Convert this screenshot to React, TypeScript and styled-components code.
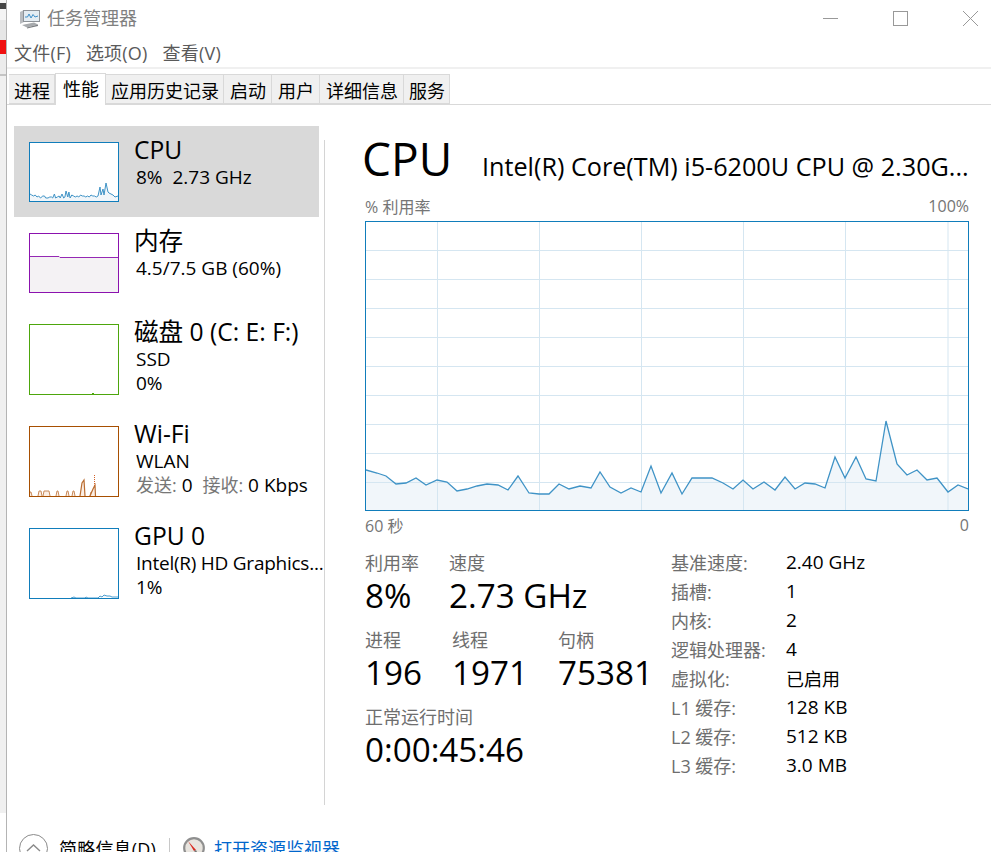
import React from 'react';
import styled, { createGlobalStyle } from 'styled-components';

const FONT = `"Open Sans", "Noto Sans CJK SC", sans-serif`;

const GlobalStyle = createGlobalStyle`
    html, body {
        margin: 0;
        height: 852px;
        overflow: hidden;
        background: #ffffff;
    }
    body {
        font-family: ${FONT};
        color: #000000;
    }
`;

// Window frame
const Page = styled.div`
    display: flex;
    width: 991px;
    height: 852px;
    overflow: hidden;
`;

const DesktopStrip = styled.div`
    display: flex;
    flex-direction: column;
    width: 6px;
    flex: none;
`;

const StripBlock = styled.div<{ $h: number; $c: string }>`
    height: ${p => p.$h}px;
    flex: none;
    background: ${p => p.$c};
`;

const Window = styled.div`
    display: flex;
    flex-direction: column;
    flex: 1;
    min-width: 0;
    border-left: 1px solid #b4b4b4;
    background: #ffffff;
`;

const TitleBar = styled.div`
    display: flex;
    align-items: center;
    box-sizing: border-box;
    height: 36px;
    flex: none;
    padding-left: 12px;
`;

const TitleText = styled.div`
    margin: 0 0 2px 6px;
    font-size: 18px;
    color: #808080;
`;

const WindowButtons = styled.div`
    display: flex;
    gap: 55px;
    margin-left: auto;
    padding-right: 13px;
    color: #999999;
`;

const WindowButton = styled.div`
    display: flex;
    align-items: center;
    justify-content: center;
    width: 15px;
    height: 36px;
`;

const MenuBar = styled.div`
    display: flex;
    align-items: center;
    gap: 15px;
    height: 31px;
    flex: none;
    padding-left: 7px;
    border-bottom: 2px solid #f0f0f0;
    font-size: 18px;
    letter-spacing: 0.2px;
    color: #5a5a5a;
`;

const TabStrip = styled.div`
    display: flex;
    align-items: flex-end;
    height: 35px;
    flex: none;
    padding-left: 2px;
    border-bottom: 1px solid #d9d9d9;
`;

const Tab = styled.div<{ $w: number; $active?: boolean }>`
    display: flex;
    align-items: center;
    justify-content: center;
    box-sizing: border-box;
    width: ${p => p.$w}px;
    height: ${p => (p.$active ? 32 : 30)}px;
    margin-bottom: ${p => (p.$active ? -1 : 0)}px;
    padding: ${p => (p.$active ? '0 0 3px 1px' : '1px 0 0 1px')};
    border: 1px solid #d9d9d9;
    border-bottom: ${p => (p.$active ? 'none' : '1px solid #d9d9d9')};
    border-left-width: ${p => (p.$active ? 1 : 0)}px;
    background: ${p => (p.$active ? '#ffffff' : '#f0f0f0')};
    font-size: 18px;
    white-space: nowrap;
    position: relative;
`;

const Body = styled.div`
    display: flex;
    flex: none;
    height: 725px;
`;

// Left list
const Sidebar = styled.div`
    width: 317px;
    flex: none;
    box-sizing: border-box;
    padding: 21px 0 0 7px;
`;

const Row = styled.div<{ $selected?: boolean; $h: number }>`
    display: flex;
    box-sizing: border-box;
    width: 305px;
    height: ${p => p.$h}px;
    padding: 16px 0 15px 15px;
    background: ${p => (p.$selected ? '#d9d9d9' : 'transparent')};
`;

const MiniFrame = styled.div<{ $c: string }>`
    width: 90px;
    flex: none;
    box-sizing: border-box;
    border: 1px solid ${p => p.$c};
    background: #ffffff;
    display: flex;
`;

const MiniSvg = styled.svg`
    display: block;
    width: 88px;
    height: 100%;
`;

const RowText = styled.div`
    margin-left: 15px;
    white-space: nowrap;
`;

const RowTitle = styled.div`
    font-size: 24.6px;
    line-height: 24px;
    margin-top: -4px;
    margin-bottom: -1px;
    height: 28px;
`;

const RowLine = styled.div<{ $tight?: boolean }>`
    font-size: 19px;
    line-height: 24px;
    margin-left: 2px;
    letter-spacing: ${p => (p.$tight ? '-0.25px' : 'normal')};
`;

const Muted = styled.span`
    font-size: 18px;
    color: #777777;
`;

const Divider = styled.div`
    width: 1px;
    flex: none;
    margin: 35px 0 25px;
    background: #d4d4d4;
`;

// Right panel
const Main = styled.div`
    flex: 1;
    min-width: 0;
    padding: 0 22px 0 40px;
`;

const Heading = styled.div`
    display: flex;
    align-items: baseline;
    height: 90px;
    margin-left: -3px;
    white-space: nowrap;
`;

const HeadingBig = styled.div`
    font-size: 46px;
    line-height: 106px;
    width: 120px;
    flex: none;
`;

const HeadingSub = styled.div`
    font-size: 25.2px;
`;

const AxisRow = styled.div<{ $h: number; $raise?: number }>`
    display: flex;
    justify-content: space-between;
    align-items: center;
    box-sizing: border-box;
    height: ${p => p.$h}px;
    padding-bottom: ${p => p.$raise ?? 0}px;
    font-size: 16px;
    color: #757575;
`;

const ChartFrame = styled.div`
    box-sizing: border-box;
    width: 604px;
    height: 290px;
    border: 1px solid #117dbb;
`;

const ChartSvg = styled.svg`
    display: block;
`;

const Stats = styled.div`
    display: flex;
    align-items: flex-start;
    margin-top: 8px;
`;

const StatColumn = styled.div`
    display: flex;
    flex-direction: column;
    gap: 11px;
    width: 306px;
    flex: none;
    padding-top: 4.5px;
`;

const StatGroup = styled.div<{ $cols: string }>`
    display: grid;
    grid-template-columns: ${p => p.$cols};
`;

const StatLabel = styled.div`
    font-size: 18px;
    line-height: 22px;
    color: #6e6e6e;
    white-space: nowrap;
`;

const StatValue = styled.div`
    font-size: 33.2px;
    line-height: 44px;
    white-space: nowrap;
`;

const SpecGrid = styled.div`
    display: grid;
    grid-template-columns: 115px auto;
    grid-auto-rows: 29px;
    align-items: center;
    white-space: nowrap;
`;

const SpecKey = styled.div`
    font-size: 18px;
    color: #6e6e6e;
`;

const SpecValue = styled.div<{ $cjk?: boolean }>`
    font-size: ${p => (p.$cjk ? 18 : 19)}px;
`;

const Footer = styled.div`
    display: flex;
    align-items: center;
    height: 36px;
    flex: none;
    padding-left: 12px;
    font-size: 18px;
    white-space: nowrap;
`;

const FooterGap = styled.div`
    width: 1px;
    height: 20px;
    margin: 0 13px;
    background: #c8c8c8;
`;

const FooterText = styled.div`
    margin-left: 11px;
    letter-spacing: 0.2px;
`;

const FooterLink = styled.div`
    margin-left: 9px;
    color: #0066cc;
`;

// Chart data, in px inside the frame
const cpuLine: number[][] = [
    [0, 248], [11, 251], [20, 254], [30, 262], [40, 261], [50, 256], [60, 263], [71, 258], [81, 260], [91, 269],
    [101, 267], [111, 264], [121, 262], [132, 263], [142, 268], [152, 254], [163, 271], [173, 272], [183, 272],
    [193, 262], [203, 267], [214, 264], [225, 266], [234, 250], [244, 265], [255, 271], [265, 266], [275, 270],
    [285, 244], [295, 271], [306, 251], [316, 272], [326, 256], [346, 256], [357, 261], [367, 267], [377, 258],
    [387, 267], [398, 260], [409, 268], [419, 255], [429, 267], [439, 261], [449, 262], [459, 266], [469, 235],
    [479, 256], [490, 235], [500, 257], [510, 259], [520, 199], [531, 242], [541, 253], [551, 248], [561, 258],
    [571, 256], [582, 270], [592, 263], [602, 267],
];

const gridX = [71.5, 173.5, 275.5, 377.5, 479.5, 582];
const gridY = [28.5, 57.5, 86.5, 115.5, 144.5, 173.5, 202.5, 231.5, 260.5];

const miniCpu: number[][] = [
    [0, 51], [3, 52], [6, 53], [9, 52], [12, 54], [15, 53], [18, 55], [22, 53], [25, 53], [27, 55], [31, 55],
    [34, 54], [37, 54], [39, 55], [42, 51], [44, 55], [47, 54], [50, 53], [52, 55], [55, 51], [58, 55], [60, 54],
    [62, 48], [65, 54], [67, 49], [69, 55], [72, 52], [75, 53], [78, 54], [81, 53], [84, 54], [87, 52], [90, 53],
    [93, 53], [96, 54], [99, 53], [102, 54], [105, 52], [108, 53], [111, 53], [114, 54], [117, 53],
];

const scaleMini = (pts: number[][]) =>
    pts.map(([x, y]) => `${((x * 68) / 117).toFixed(1)},${y}`).join(' ');

const miniCpuPeak = '68,53 70,44 71,52 73,46 74,52 76,40 78,49 79,50 81,51 83,52 85,54 88,53';

const toPoints = (pts: number[][]) => pts.map(p => p.join(',')).join(' ');

// start, end and top of each small hump on the Wi-Fi graph
const wifiHumps = [
    [-1, 2, 65], [8, 12, 64], [13, 20, 64], [26, 29, 64], [36, 39, 64], [42, 45, 64], [60, 63, 65],
];

const CpuGraph = () => (
    <ChartSvg width={602} height={288} viewBox="0 0 602 288">
        <polygon points={`0,288 ${toPoints(cpuLine)} 602,288`} fill="#f1f6fa" />
        {gridY.map(y => (
            <line key={y} x1={0} x2={602} y1={y} y2={y} stroke="#d5e6f1" strokeWidth={1} />
        ))}
        {gridX.map(x => (
            <line key={x} x1={x} x2={x} y1={0} y2={288} stroke="#d5e6f1" strokeWidth={1} />
        ))}
        <polyline points={toPoints(cpuLine)} fill="none" stroke="#3f93c6" strokeWidth={1.3} />
    </ChartSvg>
);

const MiniCpu = () => (
    <MiniSvg viewBox="0 0 88 58" preserveAspectRatio="none">
        <polygon points={`0,58 ${scaleMini(miniCpu)} ${miniCpuPeak} 88,58`} fill="#f1f6fa" />
        <polyline points={`${scaleMini(miniCpu)} ${miniCpuPeak}`} fill="none" stroke="#3f93c6" strokeWidth={1} />
    </MiniSvg>
);

const MiniMemory = () => (
    <MiniSvg viewBox="0 0 88 58" preserveAspectRatio="none">
        <polygon points="0,23 30,23 30,24 88,24 88,58 0,58" fill="#f4f2f4" />
        <polyline points="0,22.5 29,22.5 30,23.5 88,23.5" fill="none" stroke="#9528b4" strokeWidth={1} />
    </MiniSvg>
);

const MiniDisk = () => (
    <MiniSvg viewBox="0 0 88 69" preserveAspectRatio="none">
        <line x1={62} x2={64} y1={68.5} y2={68.5} stroke="#4da60c" strokeWidth={1} />
    </MiniSvg>
);

const MiniWifi = () => (
    <MiniSvg viewBox="0 0 88 69" preserveAspectRatio="none">
        {wifiHumps.map(([a, b, top]) => (
            <path
                key={a}
                d={`M${a} 69 L${a + 1} ${top} L${b - 1} ${top} L${b} 69`}
                fill="#fbeee4"
                stroke="#c98a5a"
                strokeWidth={1}
            />
        ))}
        <path d="M50 69 L52 56 L54 53 L55 69" fill="#fbeee4" stroke="#b96c30" strokeWidth={1.2} />
        <path d="M60 69 L63 62 L65 58 L65.5 69" fill="#fbeee4" stroke="#b96c30" strokeWidth={1.2} />
        <line x1={64.5} x2={64.5} y1={48} y2={60} stroke="#d2622a" strokeWidth={1} strokeDasharray="1 1" />
    </MiniSvg>
);

const MiniGpu = () => (
    <MiniSvg viewBox="0 0 88 69" preserveAspectRatio="none">
        <polyline
            points="41,69 44,68 46,69 55,69 56,68 58,69 68,69 70,67 72,68 74,66 77,67 80,67 82,68 88,68"
            fill="#f1f6fa"
            stroke="#4f9fd0"
            strokeWidth={1}
        />
    </MiniSvg>
);

const TaskManagerIcon = () => (
    <svg width={22} height={22} viewBox="0 0 22 22">
        <path d="M1 5 L5 3 L5 15 L1 17 Z" fill="#b9bcc0" />
        <rect x={4.5} y={3.5} width={16} height={11} fill="#e4ecf2" stroke="#8d9298" />
        <polyline points="6,10 8.5,10 10,7 12,11 14,7.5 16,10 19,9" fill="none" stroke="#3f8fc8" strokeWidth={1} />
        <path d="M3 18 L15 15.5 L19 17.5 L8 20.5 Z" fill="#a7aaad" />
        <path d="M8 20.5 L19 17.5 L19 19 L8 21.5 Z" fill="#7b7e82" />
    </svg>
);

const ResourceMonitorIcon = () => (
    <svg width={22} height={22} viewBox="0 0 22 22">
        <circle cx={11} cy={11} r={9.8} fill="#e8e4de" stroke="#8f8f8f" strokeWidth={2.2} />
        <path d="M5 4 L13 13 L11 14 Z" fill="#d8281e" />
        <path d="M13 13 L16 19 L11 14 Z" fill="#777777" />
    </svg>
);

const ChevronButton = () => (
    <svg width={29} height={29} viewBox="0 0 29 29">
        <circle cx={14.5} cy={14.5} r={14} fill="#ffffff" stroke="#8a8a8a" strokeWidth={1} />
        <polyline points="8,17 14.5,11 21,17" fill="none" stroke="#8a8a8a" strokeWidth={1.4} />
    </svg>
);

const tabs = [
    { label: '进程', w: 46 },
    { label: '性能', w: 51, active: true },
    { label: '应用历史记录', w: 118 },
    { label: '启动', w: 48 },
    { label: '用户', w: 48 },
    { label: '详细信息', w: 84 },
    { label: '服务', w: 46 },
];

const specs = [
    { key: '基准速度:', value: '2.40 GHz' },
    { key: '插槽:', value: '1' },
    { key: '内核:', value: '2' },
    { key: '逻辑处理器:', value: '4' },
    { key: '虚拟化:', value: '已启用', cjk: true },
    { key: 'L1 缓存:', value: '128 KB' },
    { key: 'L2 缓存:', value: '512 KB' },
    { key: 'L3 缓存:', value: '3.0 MB' },
];

export default function App() {
    return (
        <Page>
            <GlobalStyle />
            <DesktopStrip>
                <StripBlock $h={3} $c="#f4f4f4" />
                <StripBlock $h={6} $c="#444444" />
                <StripBlock $h={11} $c="#f4f4f4" />
                <StripBlock $h={20} $c="#e6e6e6" />
                <StripBlock $h={14} $c="#f01010" />
                <StripBlock $h={20} $c="#ececec" />
                <StripBlock $h={2} $c="#c4c4c4" />
                <StripBlock $h={737} $c="#f0f0f0" />
            </DesktopStrip>
            <Window>
                <TitleBar>
                    <TaskManagerIcon />
                    <TitleText>任务管理器</TitleText>
                    <WindowButtons>
                        <WindowButton>
                            <svg width={15} height={15} viewBox="0 0 15 15">
                                <line x1={0} x2={15} y1={7.5} y2={7.5} stroke="currentColor" />
                            </svg>
                        </WindowButton>
                        <WindowButton>
                            <svg width={15} height={15} viewBox="0 0 15 15">
                                <rect x={0.5} y={0.5} width={14} height={14} fill="none" stroke="currentColor" />
                            </svg>
                        </WindowButton>
                        <WindowButton>
                            <svg width={15} height={15} viewBox="0 0 15 15">
                                <path d="M0 0 L15 15 M15 0 L0 15" fill="none" stroke="currentColor" />
                            </svg>
                        </WindowButton>
                    </WindowButtons>
                </TitleBar>
                <MenuBar>
                    <span>文件(F)</span>
                    <span>选项(O)</span>
                    <span>查看(V)</span>
                </MenuBar>
                <TabStrip>
                    {tabs.map(t => (
                        <Tab key={t.label} $w={t.w} $active={t.active}>
                            {t.label}
                        </Tab>
                    ))}
                </TabStrip>
                <Body>
                    <Sidebar>
                        <Row $selected $h={91}>
                            <MiniFrame $c="#117dbb">
                                <MiniCpu />
                            </MiniFrame>
                            <RowText>
                                <RowTitle>CPU</RowTitle>
                                <RowLine>8%&nbsp; 2.73 GHz</RowLine>
                            </RowText>
                        </Row>
                        <Row $h={91}>
                            <MiniFrame $c="#8b12ae">
                                <MiniMemory />
                            </MiniFrame>
                            <RowText>
                                <RowTitle>内存</RowTitle>
                                <RowLine>4.5/7.5 GB (60%)</RowLine>
                            </RowText>
                        </Row>
                        <Row $h={102}>
                            <MiniFrame $c="#4da60c">
                                <MiniDisk />
                            </MiniFrame>
                            <RowText>
                                <RowTitle>磁盘 0 (C: E: F:)</RowTitle>
                                <RowLine>SSD</RowLine>
                                <RowLine>0%</RowLine>
                            </RowText>
                        </Row>
                        <Row $h={102}>
                            <MiniFrame $c="#a74f01">
                                <MiniWifi />
                            </MiniFrame>
                            <RowText>
                                <RowTitle>Wi-Fi</RowTitle>
                                <RowLine>WLAN</RowLine>
                                <RowLine>
                                    <Muted>发送:</Muted> 0&nbsp; <Muted>接收:</Muted> 0 Kbps
                                </RowLine>
                            </RowText>
                        </Row>
                        <Row $h={102}>
                            <MiniFrame $c="#117dbb">
                                <MiniGpu />
                            </MiniFrame>
                            <RowText>
                                <RowTitle>GPU 0</RowTitle>
                                <RowLine $tight>Intel(R) HD Graphics...</RowLine>
                                <RowLine>1%</RowLine>
                            </RowText>
                        </Row>
                    </Sidebar>
                    <Divider />
                    <Main>
                        <Heading>
                            <HeadingBig>CPU</HeadingBig>
                            <HeadingSub>Intel(R) Core(TM) i5-6200U CPU @ 2.30G...</HeadingSub>
                        </Heading>
                        <AxisRow $h={26} $raise={4}>
                            <span>% 利用率</span>
                            <span>100%</span>
                        </AxisRow>
                        <ChartFrame>
                            <CpuGraph />
                        </ChartFrame>
                        <AxisRow $h={28}>
                            <span>60 秒</span>
                            <span>0</span>
                        </AxisRow>
                        <Stats>
                            <StatColumn>
                                <StatGroup $cols="84px auto">
                                    <div>
                                        <StatLabel>利用率</StatLabel>
                                        <StatValue>8%</StatValue>
                                    </div>
                                    <div>
                                        <StatLabel>速度</StatLabel>
                                        <StatValue>2.73 GHz</StatValue>
                                    </div>
                                </StatGroup>
                                <StatGroup $cols="87px 106px auto">
                                    <div>
                                        <StatLabel>进程</StatLabel>
                                        <StatValue>196</StatValue>
                                    </div>
                                    <div>
                                        <StatLabel>线程</StatLabel>
                                        <StatValue>1971</StatValue>
                                    </div>
                                    <div>
                                        <StatLabel>句柄</StatLabel>
                                        <StatValue>75381</StatValue>
                                    </div>
                                </StatGroup>
                                <div>
                                    <StatLabel>正常运行时间</StatLabel>
                                    <StatValue>0:00:45:46</StatValue>
                                </div>
                            </StatColumn>
                            <SpecGrid>
                                {specs.map(s => (
                                    <React.Fragment key={s.key}>
                                        <SpecKey>{s.key}</SpecKey>
                                        <SpecValue $cjk={s.cjk}>{s.value}</SpecValue>
                                    </React.Fragment>
                                ))}
                            </SpecGrid>
                        </Stats>
                    </Main>
                </Body>
                <Footer>
                    <ChevronButton />
                    <FooterText>简略信息(D)</FooterText>
                    <FooterGap />
                    <ResourceMonitorIcon />
                    <FooterLink>打开资源监视器</FooterLink>
                </Footer>
            </Window>
        </Page>
    );
}
